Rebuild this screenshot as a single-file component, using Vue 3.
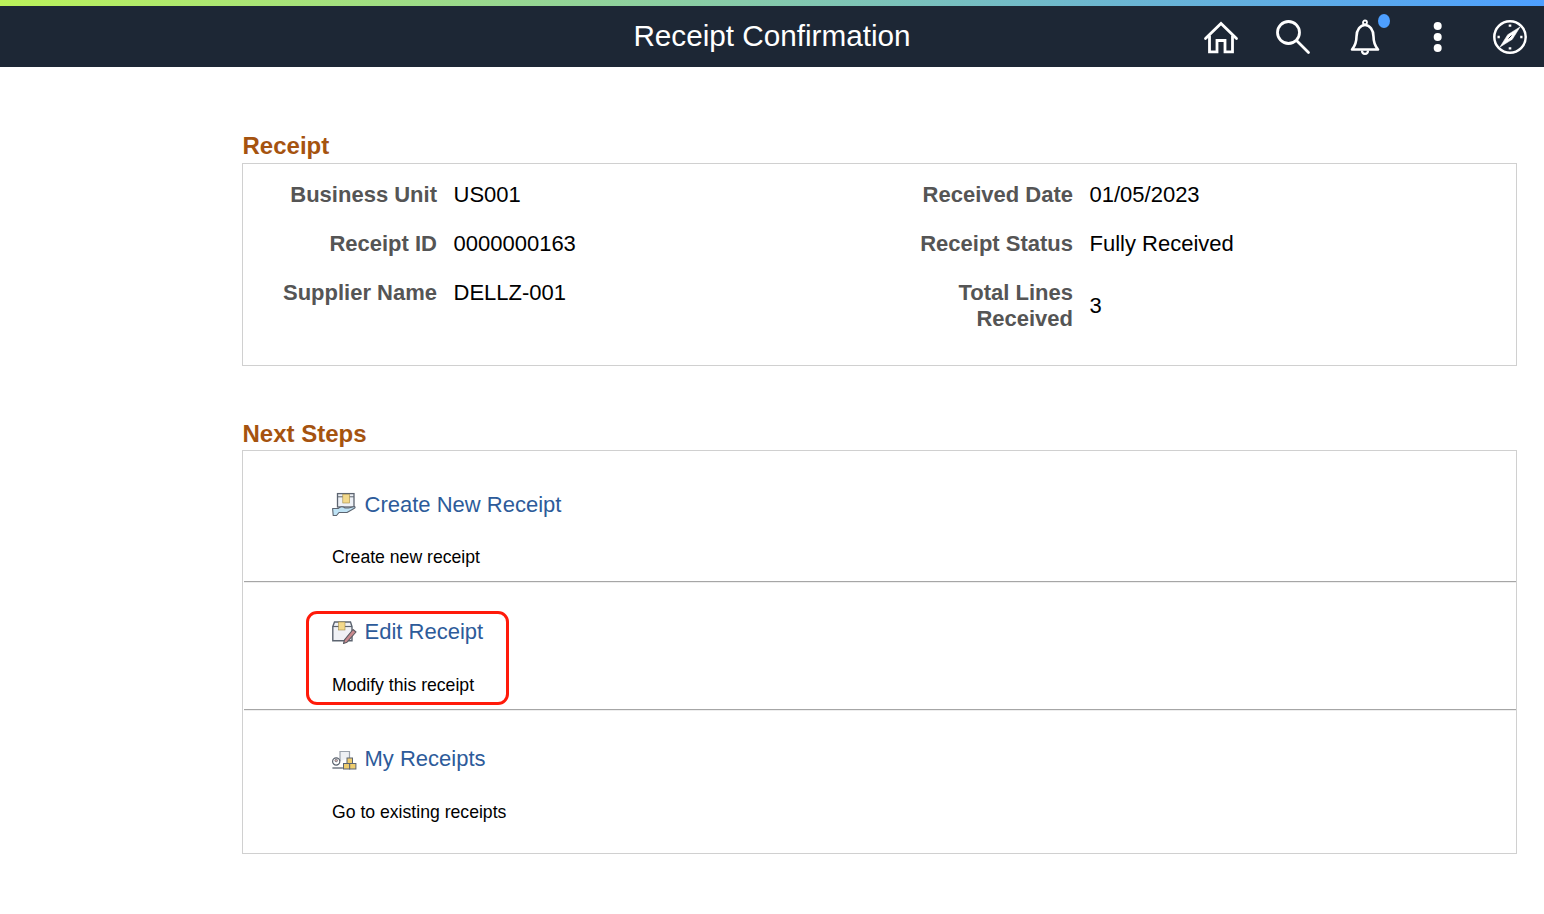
<script setup>
const leftFields = [
  { label: 'Business Unit', value: 'US001' },
  { label: 'Receipt ID', value: '0000000163' },
  { label: 'Supplier Name', value: 'DELLZ-001' },
]
const rightFields = [
  { label: 'Received Date', value: '01/05/2023' },
  { label: 'Receipt Status', value: 'Fully Received' },
  { label: 'Total Lines Received', value: '3' },
]
</script>

<template>
  <div class="page">
    <div class="accent"></div>
    <header class="banner">
      <div></div>
      <h1 class="title">Receipt Confirmation</h1>
      <nav class="actions">
        <svg class="icon" viewBox="0 0 36 36" fill="none" stroke="#fff" stroke-width="2.800" stroke-linejoin="miter">
          <path d="M1.500 19.500 17 4.500l15.500 15" stroke-linecap="round" />
          <path d="M5.500 16.500V32.800h7.500V21.500h8V32.800h7.500V16.500" />
        </svg>
        <svg class="icon" viewBox="0 0 36 36" fill="none" stroke="#fff" stroke-width="2.800">
          <circle cx="12.500" cy="13.500" r="11" />
          <path d="m21 22 11.500 11.500" stroke-linecap="round" />
        </svg>
        <div class="bell">
          <svg class="icon" viewBox="0 0 36 36" fill="none" stroke="#fff" stroke-width="2.600" stroke-linejoin="round">
            <path d="M4 30.500c3-3.500 4.500-6.500 4.500-13 0-6.500 3.800-11.500 8.500-11.500s8.500 5 8.500 11.500c0 6.500 1.500 9.500 4.500 13z" />
            <circle cx="17" cy="3.500" r="2" stroke-width="1.800" />
            <path d="M14 31.500c0 4.500 6 4.500 6 0" stroke-width="2.200" />
          </svg>
          <span class="badge"></span>
        </div>
        <svg class="icon" viewBox="0 0 36 36" fill="#fff">
          <circle cx="17.700" cy="7" r="4" />
          <circle cx="17.700" cy="18" r="4" />
          <circle cx="17.700" cy="29" r="4" />
        </svg>
        <svg class="icon" viewBox="0 0 36 36" fill="none" stroke="#fff" stroke-width="2.500">
          <circle cx="18" cy="18" r="15.700" />
          <path d="M28 8 20.300 20.300 8 28 15.700 15.700z" fill="#fff" stroke="#fff" stroke-width=".6" stroke-linejoin="round" />
          <path d="M16.500 19.500 19.500 16.500" stroke="#1d2735" stroke-width="1" />
          <path d="M18 5.500v2.300M18 28.200v2.300M5.500 18h2.300M28.200 18h2.300" stroke-width="2.600" />
        </svg>
      </nav>
    </header>

    <main class="content">
      <section class="group receipt-group">
        <h2 class="group-title">Receipt</h2>
        <div class="panel summary">
          <div class="column">
            <div v-for="f in leftFields" :key="f.label" class="field">
              <span class="label">{{ f.label }}</span>
              <span class="value">{{ f.value }}</span>
            </div>
          </div>
          <div class="column">
            <div v-for="f in rightFields" :key="f.label" class="field">
              <span class="label">{{ f.label }}</span>
              <span class="value">{{ f.value }}</span>
            </div>
          </div>
        </div>
      </section>

      <section class="group">
        <h2 class="group-title next-title">Next Steps</h2>
        <div class="panel steps">
          <div class="step step-new">
            <a class="step-link">
              <svg class="step-icon" viewBox="0 0 24 24" fill="none">
                <rect x="5.500" y=".6" width="16.500" height="13.400" fill="#eef1f6" stroke="#5c6470" stroke-width="1.300" />
                <path d="M5.500 3.800h16.500" stroke="#5c6470" stroke-width="1" />
                <rect x="10.800" y="1.200" width="6.800" height="8.800" fill="#f3d98b" stroke="#a08a4a" stroke-width=".6" />
                <path d="M.6 15.500h5.500c2-2 5-2 7-.5h3.500l6-1.500c.8.800.5 1.400-.2 1.800L15 19.500H7l-2.500 3H1.200z" fill="#bfe3f5" stroke="#5c6470" stroke-width="1.100" stroke-linejoin="round" />
              </svg>
              <span>Create New Receipt</span>
            </a>
            <p class="step-desc">Create new receipt</p>
          </div>
          <div class="step step-edit">
            <a class="step-link">
              <svg class="step-icon" viewBox="0 0 24 24" fill="none">
                <path d="M.8 6.500 2.500 2h16l1.500 4.500V20.700H.8z" fill="#f0f1f5" stroke="#5c6470" stroke-width="1.400" />
                <path d="M.8 6.500H20" stroke="#5c6470" stroke-width="1.200" />
                <rect x="6.500" y="2" width="6.500" height="8" fill="#f3d98b" stroke="#a08a4a" stroke-width=".6" />
                <path d="M21 9.500 24 12 15 22.200 11.500 23.500l1-3.700z" fill="#c98a8e" stroke="#5c5a62" stroke-width="1.100" stroke-linejoin="round" />
              </svg>
              <span>Edit Receipt</span>
            </a>
            <p class="step-desc">Modify this receipt</p>
            <div class="highlight"></div>
          </div>
          <div class="step step-mine">
            <a class="step-link">
              <svg class="step-icon" viewBox="0 0 24 24" fill="none">
                <path d="M8 14V4.500h9.500V11" fill="#eef0f4" stroke="#9aa1ab" stroke-width="1.200" />
                <circle cx="4.200" cy="14.500" r="3.600" fill="#fff" stroke="#5c6470" stroke-width="1.200" />
                <circle cx="4.200" cy="13.500" r="1.300" fill="#d7a9a2" stroke="#5c6470" stroke-width=".7" />
                <path d="M.4 21h10.500" stroke="#5c6470" stroke-width="1.300" />
                <rect x="15" y="11" width="5.500" height="5.500" fill="#efcd6e" stroke="#5c6470" stroke-width="1" />
                <rect x="11.500" y="16.500" width="6.200" height="5.500" fill="#efcd6e" stroke="#5c6470" stroke-width="1" />
                <rect x="17.700" y="16.500" width="6.200" height="5.500" fill="#efcd6e" stroke="#5c6470" stroke-width="1" />
              </svg>
              <span>My Receipts</span>
            </a>
            <p class="step-desc">Go to existing receipts</p>
          </div>
        </div>
      </section>
    </main>
  </div>
</template>

<style>
html, body { margin: 0; background: #fff; }
</style>

<style scoped>
.page {
  font-family: "Liberation Sans", Arial, sans-serif;
  color: #000;
  height: 914px;
  overflow: hidden;
  background: #fff;
}
.accent {
  height: 6px;
  background: linear-gradient(90deg, #bbf25a 0%, #4d9fff 100%);
}
.banner {
  height: 61px;
  background: #1d2735;
  display: grid;
  grid-template-columns: 1fr auto 1fr;
  align-items: center;
}
.title {
  margin: 0;
  font-size: 29.700px;
  font-weight: 400;
  color: #fff;
  line-height: 59px;
  padding-bottom: 2px;
}
.actions {
  display: flex;
  justify-content: flex-end;
  align-items: center;
  gap: 36px;
  padding-right: 16px;
}
.icon {
  display: block;
  width: 36px;
  height: 36px;
  overflow: visible;
}
.bell { position: relative; }
.badge {
  position: absolute;
  left: 30px;
  top: -5px;
  width: 12px;
  height: 14px;
  border-radius: 50%;
  background: #4d9fff;
}
.content {
  margin: 0 27px 0 242px;
  padding-top: 63px;
}
.receipt-group { margin-bottom: 52px; }
.group-title {
  margin: 0;
  padding: 0 0 1px 0.500px;
  font-size: 24px;
  line-height: 32px;
  font-weight: 700;
  color: #a5530f;
}
.next-title { padding-bottom: 0; }
.panel {
  border: 1px solid #d0d0d0;
  box-sizing: border-box;
}
.summary {
  height: 203px;
  display: grid;
  grid-template-columns: 636px 1fr;
  padding-top: 18px;
  box-sizing: border-box;
}
.column {
  display: flex;
  flex-direction: column;
  gap: 23px;
}
.field {
  display: grid;
  grid-template-columns: 194px 1fr;
  column-gap: 16.500px;
  align-items: center;
  font-size: 22px;
  line-height: 26px;
}
.label {
  text-align: right;
  font-weight: 700;
  color: #555;
}
.step {
  position: relative;
  margin-left: 1px;
  padding-left: 88px;
  box-sizing: border-box;
  border-bottom: 1px solid #a6a6a6;
  box-shadow: 0 1px 0 #eeeeee;
}
.step-new { height: 131px; padding-top: 38px; }
.step-edit { height: 128px; padding-top: 34px; }
.step-mine { height: 143px; padding-top: 33px; border-bottom: none; box-shadow: none; }
.step-link {
  display: flex;
  align-items: center;
  gap: 8.500px;
  font-size: 22px;
  line-height: 32px;
  color: #2d5b9a;
}
.step-icon {
  width: 24px;
  height: 24px;
  flex: none;
  overflow: visible;
}
.step-desc {
  margin: 27px 0 0;
  font-size: 17.640px;
  line-height: 21px;
}
.step-new .step-desc { margin-top: 26px; }
.highlight {
  position: absolute;
  left: 62px;
  top: 29px;
  width: 203px;
  height: 94px;
  box-sizing: border-box;
  border: 3px solid #ff1a0a;
  border-radius: 11px;
}
</style>
